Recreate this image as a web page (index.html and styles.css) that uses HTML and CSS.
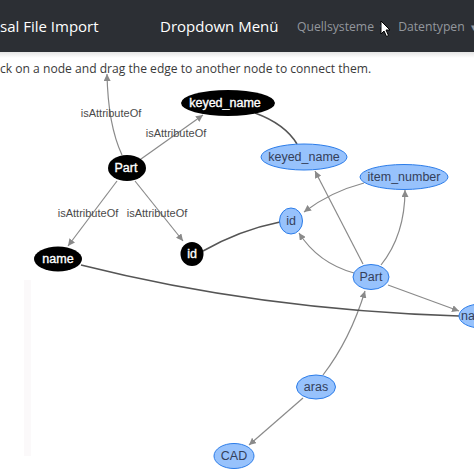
FILE: index.html
```html
<!DOCTYPE html>
<html lang="de">
<head>
  <meta charset="UTF-8">
  <title>Universal File Import</title>
  <link rel="stylesheet" href="styles.css">
</head>
<body>
  <nav class="navbar">
    <span class="brand">sal File Import</span>
    <span class="title">Dropdown Menü</span>
    <span class="menu">Quellsysteme <span class="caret">▾</span></span>
    <span class="menu">Datentypen <span class="caret">▾</span></span>
    <svg class="cursor" width="12" height="18" viewBox="0 0 12 18">
      <path d="M1 1 L1 14 L4 11 L6.5 16.5 L8.5 15.5 L6 10 L10 10 Z" fill="#fff" stroke="#000" stroke-width="1"/>
    </svg>
  </nav>
  <div class="shade"></div>
  <p class="hint">ck on a node and drag the edge to another node to connect them.</p>

  <div class="network">
    <svg width="474" height="474" viewBox="0 0 474 474">
      <defs>
        <marker id="arr" viewBox="0 0 10 10" refX="10" refY="5" markerWidth="7" markerHeight="7" orient="auto-start-reverse" markerUnits="userSpaceOnUse">
          <path d="M0 0 L10 5 L0 10 Z" fill="#8a8a8a"/>
        </marker>
      </defs>
      <rect x="24" y="280" width="7" height="176" fill="#fbf9fa"/>

      <g class="edge">
        <path d="M122 155 Q108 125 107 74" marker-end="url(#arr)"/>
        <path d="M141 159 L203 115" marker-end="url(#arr)"/>
        <path d="M117 181 L68 246" marker-end="url(#arr)"/>
        <path d="M135 181 L183 241" marker-end="url(#arr)"/>
        <path d="M363 264 L315 171" marker-end="url(#arr)"/>
        <path d="M381 265 Q405 235 405 190" marker-end="url(#arr)"/>
        <path d="M364 183 Q330 192 304 212" marker-end="url(#arr)"/>
        <path d="M354 273 Q318 263 299 233" marker-end="url(#arr)"/>
        <path d="M388 285 L459 311" marker-end="url(#arr)"/>
        <path d="M323 375 Q350 340 365 291" marker-end="url(#arr)"/>
        <path d="M303 398 L249 445" marker-end="url(#arr)"/>
      </g>
      <g class="link">
        <path d="M255 113 Q285 124 297 144"/>
        <path d="M203 251 Q240 230 280 222"/>
        <path d="M81 265 C200 295 330 312 459 316"/>
      </g>

      <g class="elabel">
        <text x="111" y="117">isAttributeOf</text>
        <text x="176" y="137">isAttributeOf</text>
        <text x="88" y="217">isAttributeOf</text>
        <text x="157" y="217">isAttributeOf</text>
      </g>

      <g class="dark">
        <ellipse cx="228" cy="103" rx="47" ry="13"/>
        <text x="225" y="107">keyed_name</text>
        <ellipse cx="127" cy="168" rx="19" ry="13"/>
        <text x="126" y="172">Part</text>
        <ellipse cx="58" cy="259" rx="24" ry="12.5"/>
        <text x="58" y="263">name</text>
        <ellipse cx="192" cy="254" rx="11.5" ry="12"/>
        <text x="192" y="258">id</text>
      </g>

      <g class="blue">
        <ellipse cx="304" cy="157" rx="43" ry="13"/>
        <text x="304" y="161">keyed_name</text>
        <ellipse cx="404" cy="177" rx="44" ry="12.5"/>
        <text x="404" y="181">item_number</text>
        <ellipse cx="291" cy="221" rx="11.5" ry="13"/>
        <text x="291" y="225">id</text>
        <ellipse cx="481" cy="316" rx="22" ry="12"/>
        <text x="461" y="320" class="cut">na</text>
        <ellipse cx="371" cy="277" rx="18" ry="12.5"/>
        <text x="371" y="281">Part</text>
        <ellipse cx="316" cy="387" rx="19.5" ry="12"/>
        <text x="316" y="391">aras</text>
        <ellipse cx="234" cy="456" rx="20" ry="12.5"/>
        <text x="234" y="460">CAD</text>
      </g>
    </svg>
  </div>
</body>
</html>
```

FILE: styles.css
```css
body { margin: 0; background: #fff; font-family: 'Open Sans', 'Noto Sans', sans-serif; overflow: hidden; width: 474px; height: 474px; position: relative; }
.navbar { height: 52px; background: #2c2f34; display: flex; align-items: center; white-space: nowrap; position: relative; z-index: 2; }
.navbar span { flex-shrink: 0; }
.brand { color: #fff; font-size: 15px; width: 160px; }
.title { color: #fff; font-size: 15px; width: 137px; }
.menu { color: #93979d; font-size: 12.2px; margin-right: 12px; }
.caret { font-size: 11px; margin-left: 3px; }
.cursor { position: absolute; left: 380px; top: 20px; }
.shade { height: 6px; background: linear-gradient(#e4e4e4, #fff); }
.hint { margin: 0; padding: 2px 0 0 0; font-size: 12.1px; color: #3a3a3a; white-space: nowrap; position: relative; z-index: 1; }
.network { position: absolute; left: 0; top: 0; width: 474px; height: 474px; }
.edge path { fill: none; stroke: #8a8a8a; stroke-width: 1.2; }
.link path { fill: none; stroke: #555; stroke-width: 1.6; }
.elabel text { font-family: 'Liberation Sans', Arial, sans-serif; font-size: 11px; fill: #4a4a4a; text-anchor: middle; }
.dark ellipse { fill: #000; }
.dark text { font-family: 'Liberation Sans', Arial, sans-serif; font-size: 12.5px; fill: #fff; stroke: #fff; stroke-width: 0.35; text-anchor: middle; }
.blue ellipse { fill: #97c2fc; stroke: #2b7ce9; stroke-width: 1; }
.blue text { font-family: 'Liberation Sans', Arial, sans-serif; font-size: 12.5px; fill: #34405a; text-anchor: middle; }
.blue text.cut { text-anchor: start; }
```
